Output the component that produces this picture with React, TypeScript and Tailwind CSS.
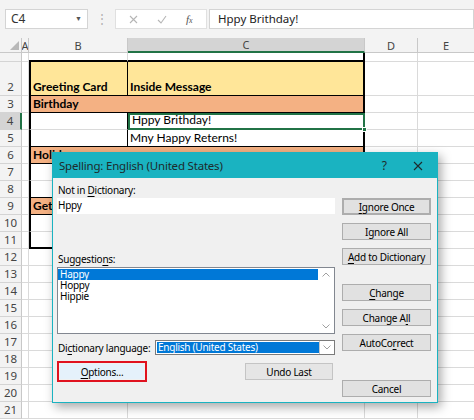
import React from 'react'

const ui = "font-['Noto_Sans',sans-serif]"
const cellFont = "font-['Lato',sans-serif]"

type RowDef = {
    n: number
    h: string
    b?: { text?: string; cls: string; bold?: boolean }
    c?: { text?: string; cls: string; bold?: boolean }
}

const grid = 'border-r border-b border-[#dadada]'
const Y = 'bg-[#ffe699]'
const O = 'bg-[#f4b183]'

const rows: RowDef[] = [
    { n: 1, h: 'h-[9px]', b: { cls: 'border-r border-r-[#dadada] border-b-2 border-b-black' }, c: { cls: 'border-r-2 border-r-black border-b-2 border-b-black' } },
    { n: 2, h: 'h-[34px]', b: { text: 'Greeting Card', bold: true, cls: `${Y} border-l-2 border-l-black border-r border-r-black border-b border-b-black` }, c: { text: 'Inside Message', bold: true, cls: `${Y} border-r-2 border-r-black border-b border-b-black` } },
    { n: 3, h: 'h-[17px]', b: { text: 'Birthday', bold: true, cls: `${O} border-l-2 border-l-black border-b border-b-black` }, c: { cls: `${O} border-r-2 border-r-black border-b border-b-black` } },
    { n: 4, h: 'h-[17px]', b: { cls: 'border-l-2 border-l-black border-r border-r-black border-b border-b-[#dadada]' }, c: { text: 'Hppy Brithday!', cls: 'border-2 border-[#217346] relative' } },
    { n: 5, h: 'h-[17px]', b: { cls: 'border-l-2 border-l-black border-r border-r-black border-b border-b-black' }, c: { text: 'Mny Happy Reterns!', cls: 'border-r-2 border-r-black border-b border-b-black' } },
    { n: 6, h: 'h-[17px]', b: { text: 'Holiday', bold: true, cls: `${O} border-l-2 border-l-black border-b border-b-black` }, c: { cls: `${O} border-r-2 border-r-black border-b border-b-black` } },
    { n: 7, h: 'h-[17px]', b: { cls: 'border-l-2 border-l-black border-r border-r-black border-b border-b-[#dadada]' }, c: { cls: 'border-r-2 border-r-black border-b border-b-[#dadada]' } },
    { n: 8, h: 'h-[17px]', b: { cls: 'border-l-2 border-l-black border-r border-r-black border-b border-b-black' }, c: { cls: 'border-r-2 border-r-black border-b border-b-black' } },
    { n: 9, h: 'h-[17px]', b: { text: 'Get Well', bold: true, cls: `${O} border-l-2 border-l-black border-b border-b-black` }, c: { cls: `${O} border-r-2 border-r-black border-b border-b-black` } },
    { n: 10, h: 'h-[17px]', b: { cls: 'border-l-2 border-l-black border-r border-r-black border-b border-b-[#dadada]' }, c: { cls: 'border-r-2 border-r-black border-b border-b-[#dadada]' } },
    { n: 11, h: 'h-[17px]', b: { cls: 'border-l-2 border-l-black border-r border-r-black border-b-2 border-b-black' }, c: { cls: 'border-r-2 border-r-black border-b-2 border-b-black' } },
]
for (let n = 12; n <= 21; n++) rows.push({ n, h: 'h-[17px]' })

function Btn({ children, cls = '' }: { children: React.ReactNode; cls?: string }) {
    return (
        <div className={`h-[17px] flex items-center justify-center bg-[#e1e1e1] border border-[#adadad] text-[10px] leading-[12px] text-black whitespace-nowrap ${cls}`}>
            <span>{children}</span>
        </div>
    )
}

function U({ children }: { children: React.ReactNode }) {
    return <span className="underline underline-offset-[2px]">{children}</span>
}

function Chevron({ up = false }: { up?: boolean }) {
    return (
        <svg width="8" height="5" viewBox="0 0 8 5" className={up ? 'rotate-180' : ''}>
            <path d="M0.5 0.5 L4 4 L7.5 0.5" fill="none" stroke="#a0a0a0" strokeWidth="1" />
        </svg>
    )
}

export default function App() {
    return (
        <div className={`relative w-[474px] h-[420px] overflow-hidden bg-white ${ui}`}>
            {/* formula bar */}
            <div className="h-[38px] bg-[#f3f3f3] flex items-start pt-[9px] pl-[5px]">
                <div className="w-[83px] h-[20px] bg-white border border-[#d4d4d4] flex items-center justify-between px-[5px]">
                    <span className="text-[12px] text-[#333]">C4</span>
                    <span className="text-[7px] text-[#555]">▼</span>
                </div>
                <div className="w-[27px] h-[20px] flex items-center justify-center text-[#b0b0b0] text-[12px]">⋮</div>
                <div className="w-[92px] h-[20px] bg-white border border-[#e0e0e0] flex items-center justify-around px-[4px]">
                    <svg width="9" height="9" viewBox="0 0 9 9"><path d="M1 1 L8 8 M8 1 L1 8" stroke="#b5b5b5" strokeWidth="1.1" /></svg>
                    <svg width="10" height="9" viewBox="0 0 10 9"><path d="M1 5 L4 8 L9 1" fill="none" stroke="#b5b5b5" strokeWidth="1.1" /></svg>
                    <span className="italic text-[11px] text-[#555] font-['Liberation_Serif',serif]">f<span className="text-[8px]">x</span></span>
                </div>
                <div className="ml-[2px] flex-1 h-[20px] bg-white border border-[#d4d4d4] flex items-center pl-[8px]">
                    <span className="text-[11.5px] text-[#222]">Hppy Brithday!</span>
                </div>
            </div>

            {/* column header */}
            <div className="flex h-[15px] text-[11px] leading-[13px] text-[#444]">
                <div className="w-[22px] bg-[#f3f3f3] border-r border-b border-[#c8c8c8] flex items-end justify-end p-[2px]">
                    <svg width="9" height="9" viewBox="0 0 9 9"><path d="M9 0 L9 9 L0 9 Z" fill="#b8b8b8" /></svg>
                </div>
                <div className="w-[7px] bg-[#f3f3f3] border-r border-b border-[#c8c8c8] flex items-center justify-center overflow-hidden">A</div>
                <div className="w-[99px] bg-[#f3f3f3] border-r border-b border-[#c8c8c8] flex items-center justify-center">B</div>
                <div className="w-[237px] bg-[#d4d4d4] border-r border-[#c8c8c8] border-b-2 border-b-[#217346] flex items-center justify-center">C</div>
                <div className="w-[53px] bg-[#f3f3f3] border-r border-b border-[#c8c8c8] flex items-center justify-center">D</div>
                <div className="w-[56px] bg-[#f3f3f3] border-b border-[#c8c8c8] flex items-center justify-center">E</div>
            </div>

            {/* rows */}
            {rows.map(r => (
                <div key={r.n} className={`flex ${r.h}`}>
                    <div className={`w-[22px] shrink-0 flex justify-center items-end pb-[1px] text-[11.5px] leading-[14px] text-[#444] border-b border-[#d4d4d4] ${r.n === 4 ? 'bg-[#d4d4d4] border-r-2 border-r-[#217346]' : 'bg-[#f3f3f3] border-r border-r-[#c8c8c8]'}`}>
                        {r.n === 1 ? null : r.n}
                    </div>
                    <div className={`w-[7px] shrink-0 ${grid}`} />
                    <div className={`w-[99px] shrink-0 flex items-end pl-[2px] pb-[1px] whitespace-nowrap text-[12px] leading-[14px] text-black ${cellFont} ${r.b ? r.b.cls : grid} ${r.b?.bold ? 'font-bold' : ''}`}>
                        {r.b?.text}
                    </div>
                    <div className={`w-[237px] shrink-0 flex items-end pl-[2px] pb-[1px] whitespace-nowrap text-[12px] leading-[14px] text-black ${cellFont} ${r.c ? r.c.cls : grid} ${r.c?.bold ? 'font-bold' : ''}`}>
                        {r.c?.text}
                        {r.n === 4 && <span className="absolute -right-[4px] -bottom-[4px] w-[5px] h-[5px] bg-[#217346] border border-white" />}
                    </div>
                    <div className={`w-[53px] shrink-0 ${grid}`} />
                    <div className={`w-[56px] shrink-0 border-b border-[#dadada]`} />
                </div>
            ))}

            {/* spelling dialog */}
            <div className="absolute left-[52px] top-[152px] w-[386px] h-[251px] bg-[#f0f0f0] border border-[#1ab3c1] shadow-[3px_4px_10px_rgba(0,0,0,0.35)] flex flex-col">
                <div className="h-[25px] shrink-0 bg-[#1ab3c1] flex items-center pl-[6px] pr-[14px]">
                    <span className="text-[11.5px] text-[#1e2a2c] tracking-[-0.2px]">Spelling: English (United States)</span>
                    <span className="ml-auto text-[12px] text-[#1e2a2c] mr-[26px]">?</span>
                    <svg width="10" height="10" viewBox="0 0 10 10"><path d="M1 1 L9 9 M9 1 L1 9" stroke="#1e2a2c" strokeWidth="1.1" /></svg>
                </div>
                <div className="flex pl-[4px] pr-[5px] text-[10px] leading-[12px] tracking-[-0.25px] text-black whitespace-nowrap">
                    <div className="w-[278px] flex flex-col">
                        <div className="h-[20px] flex items-end pb-[2px] pl-[1px]"><span>Not in <U>D</U>ictionary:</span></div>
                        <div className="h-[16px] bg-white pl-[1px] pt-[1px]">Hppy</div>
                        <div className="h-[53px] flex items-end pl-[1px] pb-[2px]"><span>Suggestio<U>n</U>s:</span></div>
                        <div className="h-[67px] bg-white border border-[#828790] flex">
                            <div className="flex-1 pt-[1px] leading-[11px]">
                                <div className="bg-[#0078d7] text-white pl-[2px]">Happy</div>
                                <div className="pl-[2px]">Hoppy</div>
                                <div className="pl-[2px]">Hippie</div>
                            </div>
                            <div className="w-[16px] flex flex-col items-center justify-between py-[4px]">
                                <Chevron up />
                                <Chevron />
                            </div>
                        </div>
                        <div className="mt-[6px] h-[15px] flex items-center">
                            <div className="w-[98px] pl-[1px]"><span>Di<U>c</U>tionary language:</span></div>
                            <div className="flex-1 h-[15px] bg-white border border-[#7a7a7a] flex items-center pl-[1px]">
                                <div className="flex-1 h-[11px] bg-[#0078d7] text-white leading-[11px] pl-[1px]">English (United States)</div>
                                <div className="w-[15px] h-full flex items-center justify-center border-l border-[#c8c8c8]">
                                    <Chevron />
                                </div>
                            </div>
                        </div>
                        <div className="mt-[6px] flex items-start">
                            <div className="w-[90px] h-[21px] border-2 border-[#e0121f] p-[1px]">
                                <div className="h-full bg-[#e5f1fb] flex items-center justify-center"><span><U>O</U>ptions...</span></div>
                            </div>
                            <Btn cls="ml-[98px] mt-[2px] w-[88px] text-[#a6a6a6] border-[#c4c4c4] bg-[#e5e5e5]">Undo Last</Btn>
                        </div>
                    </div>
                    <div className="ml-[7px] w-[89px] flex flex-col">
                        <Btn cls="mt-[20px] border-[#0078d7] border-2"><U>I</U>gnore Once</Btn>
                        <Btn cls="mt-[8px]">I<U>g</U>nore All</Btn>
                        <Btn cls="mt-[8px]"><U>A</U>dd to Dictionary</Btn>
                        <Btn cls="mt-[19px]"><U>C</U>hange</Btn>
                        <Btn cls="mt-[8px]">Change A<U>l</U>l</Btn>
                        <Btn cls="mt-[8px]">AutoCo<U>r</U>rect</Btn>
                        <Btn cls="mt-[29px]">Cancel</Btn>
                    </div>
                </div>
            </div>
        </div>
    )
}
